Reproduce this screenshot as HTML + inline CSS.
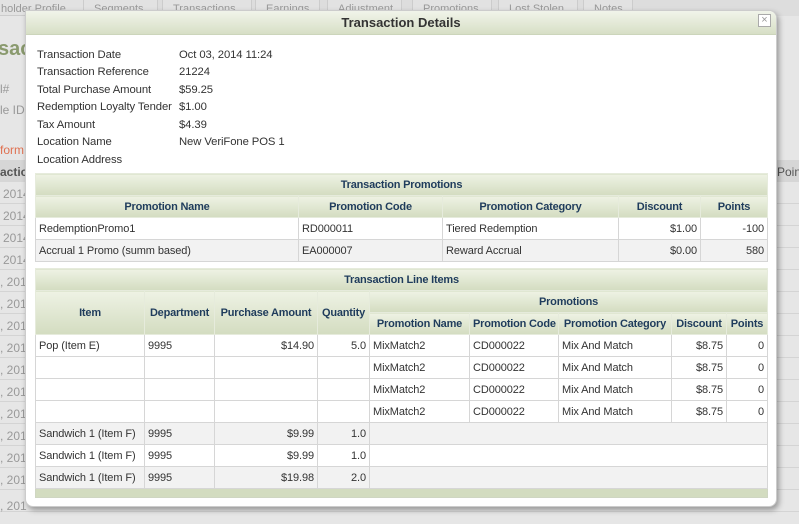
<!DOCTYPE html>
<html><head><style>
*{margin:0;padding:0;box-sizing:border-box}
body{width:799px;height:524px;overflow:hidden;background:#e6e6e6;font-family:"Liberation Sans",sans-serif;font-size:12px;color:#333;position:relative}
.bg{position:absolute;color:#999;font-size:12px}
.tabs{position:absolute;top:0;left:0;width:799px;height:16px;background:#ddd}
.tab{position:absolute;top:0;height:16px;border:1px solid #ccc;border-top:none;background:#e2e2e2;color:#999;font-size:11px;padding-left:10px;line-height:18px}
.row{position:absolute;left:0;width:799px;height:22px;border-bottom:1px solid #d4d4d4}
.modal{position:absolute;left:25px;top:10px;width:752px;height:497px;background:#fff;border-radius:0 8px 8px 8px;box-shadow:2px 3px 6px rgba(0,0,0,.35);border:1px solid #ccc;overflow:hidden}
.mh{height:24px;background:linear-gradient(#f1f4ea,#d7dfc6);text-align:center;font-weight:bold;font-size:13px;line-height:24px;color:#333;border-bottom:1px solid #ccd5bb}
.close{position:absolute;right:5px;top:3px;width:13px;height:13px;border:1px solid #aaa;background:#fff;font-size:11px;line-height:11px;text-align:center;color:#999}
.info{position:absolute;left:11px;top:35px;border-collapse:collapse}
.info td{padding:0;font-size:11.3px;height:17.5px;white-space:nowrap;letter-spacing:-0.1px}
table.t{position:absolute;left:9px;border-collapse:collapse;width:732px;table-layout:fixed;border:1px solid #cfd6c2}
table.t td,table.t th{height:22px;border:1px solid #d6d6d6;padding:0 3px;font-size:11px;white-space:nowrap;overflow:hidden;letter-spacing:-0.1px}
table.t th{background:linear-gradient(#eef2e4,#d3dcc0);color:#1f3c5c;font-weight:bold;text-align:center;border-color:#e6ebdc;letter-spacing:-0.2px}
.r{text-align:right}
.alt td{background:#f2f2f2}
.foot td{height:9px!important;background:#d3dcc0;border:none!important}
</style></head><body>
<div class="tabs">
<div class="tab" style="left:-10px;width:95px">holder Profile</div>
<div class="tab" style="left:83px;width:75px">Segments</div>
<div class="tab" style="left:162px;width:90px">Transactions</div>
<div class="tab" style="left:255px;width:65px">Earnings</div>
<div class="tab" style="left:327px;width:75px">Adjustment</div>
<div class="tab" style="left:412px;width:80px">Promotions</div>
<div class="tab" style="left:498px;width:80px">Lost Stolen</div>
<div class="tab" style="left:583px;width:50px">Notes</div>
</div>
<div class="bg" style="top:38px;left:-2px;font-size:20px;font-weight:bold;color:#8a9a6e">sact</div>
<div class="bg" style="top:82px;left:0">l#</div>
<div class="bg" style="top:103px;left:0">le ID</div>
<div class="bg" style="top:143px;left:0;color:#e07050">form</div>
<div style="position:absolute;top:160px;left:0;width:799px;height:22px;background:#d6d6d6"></div>
<div class="bg" style="top:165px;left:0;color:#555;font-weight:bold">actio</div>
<div class="bg" style="top:165px;left:777px;color:#555">Point</div>
<div class="row" style="top:182px"></div><div class="row" style="top:204px"></div><div class="row" style="top:226px"></div><div class="row" style="top:248px"></div><div class="row" style="top:270px"></div><div class="row" style="top:292px"></div><div class="row" style="top:314px"></div><div class="row" style="top:336px"></div><div class="row" style="top:358px"></div><div class="row" style="top:380px"></div><div class="row" style="top:402px"></div><div class="row" style="top:424px"></div><div class="row" style="top:446px"></div><div class="row" style="top:468px"></div><div class="row" style="top:490px"></div>
<div class="bg" style="top:187px;left:3px">2014</div><div class="bg" style="top:209px;left:3px">2014</div><div class="bg" style="top:231px;left:3px">2014</div><div class="bg" style="top:253px;left:3px">2014</div>
<div class="bg" style="top:275px;left:0">, 201</div><div class="bg" style="top:297px;left:0">, 201</div><div class="bg" style="top:319px;left:0">, 201</div><div class="bg" style="top:341px;left:0">, 201</div><div class="bg" style="top:363px;left:0">, 201</div><div class="bg" style="top:385px;left:0">, 201</div><div class="bg" style="top:407px;left:0">, 201</div><div class="bg" style="top:429px;left:0">, 201</div><div class="bg" style="top:451px;left:0">, 201</div><div class="bg" style="top:473px;left:0">, 201</div><div class="bg" style="top:499px;left:0">, 201</div>

<div class="modal">
<div class="mh">Transaction Details</div>
<div class="close">×</div>
<table class="info">
<tr><td style="width:142px">Transaction Date</td><td>Oct 03, 2014 11:24</td></tr>
<tr><td>Transaction Reference</td><td>21224</td></tr>
<tr><td>Total Purchase Amount</td><td>$59.25</td></tr>
<tr><td>Redemption Loyalty Tender</td><td>$1.00</td></tr>
<tr><td>Tax Amount</td><td>$4.39</td></tr>
<tr><td>Location Name</td><td>New VeriFone POS 1</td></tr>
<tr><td>Location Address</td><td></td></tr>
</table>
<table class="t" style="top:162px">
<colgroup><col style="width:263px"><col style="width:144px"><col style="width:176px"><col style="width:82px"><col style="width:67px"></colgroup>
<tr><th colspan="5">Transaction Promotions</th></tr>
<tr><th>Promotion Name</th><th>Promotion Code</th><th>Promotion Category</th><th>Discount</th><th>Points</th></tr>
<tr><td>RedemptionPromo1</td><td>RD000011</td><td>Tiered Redemption</td><td class="r">$1.00</td><td class="r">-100</td></tr>
<tr class="alt"><td>Accrual 1 Promo (summ based)</td><td>EA000007</td><td>Reward Accrual</td><td class="r">$0.00</td><td class="r">580</td></tr>
</table>
<table class="t" style="top:257px">
<colgroup><col style="width:109px"><col style="width:70px"><col style="width:103px"><col style="width:52px"><col style="width:100px"><col style="width:89px"><col style="width:113px"><col style="width:55px"><col style="width:41px"></colgroup>
<tr><th colspan="9">Transaction Line Items</th></tr>
<tr><th rowspan="2">Item</th><th rowspan="2">Department</th><th rowspan="2">Purchase Amount</th><th rowspan="2">Quantity</th><th colspan="5">Promotions</th></tr>
<tr><th>Promotion Name</th><th>Promotion Code</th><th>Promotion Category</th><th>Discount</th><th>Points</th></tr>
<tr><td>Pop (Item E)</td><td>9995</td><td class="r">$14.90</td><td class="r">5.0</td><td>MixMatch2</td><td>CD000022</td><td>Mix And Match</td><td class="r">$8.75</td><td class="r">0</td></tr>
<tr><td></td><td></td><td></td><td></td><td>MixMatch2</td><td>CD000022</td><td>Mix And Match</td><td class="r">$8.75</td><td class="r">0</td></tr>
<tr><td></td><td></td><td></td><td></td><td>MixMatch2</td><td>CD000022</td><td>Mix And Match</td><td class="r">$8.75</td><td class="r">0</td></tr>
<tr><td></td><td></td><td></td><td></td><td>MixMatch2</td><td>CD000022</td><td>Mix And Match</td><td class="r">$8.75</td><td class="r">0</td></tr>
<tr class="alt"><td>Sandwich 1 (Item F)</td><td>9995</td><td class="r">$9.99</td><td class="r">1.0</td><td colspan="5"></td></tr>
<tr><td>Sandwich 1 (Item F)</td><td>9995</td><td class="r">$9.99</td><td class="r">1.0</td><td colspan="5"></td></tr>
<tr class="alt"><td>Sandwich 1 (Item F)</td><td>9995</td><td class="r">$19.98</td><td class="r">2.0</td><td colspan="5"></td></tr>
<tr class="foot"><td colspan="9"></td></tr>
</table>
</div>
</body></html>
